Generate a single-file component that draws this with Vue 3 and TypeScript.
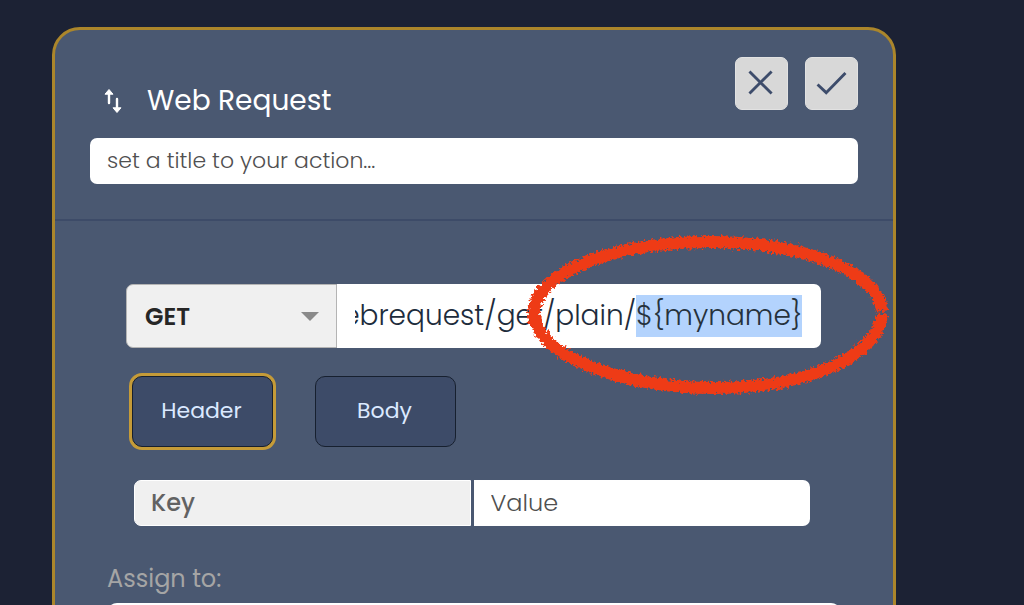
<script setup lang="ts">
import { nextTick, onMounted, ref } from 'vue'

type Tab = 'Header' | 'Body'

const tabs: Tab[] = ['Header', 'Body']
const activeTab = ref<Tab>('Header')
const title = ref('')
const method = ref('GET')
const url = ref('/webrequest/get/plain/${myname}')
const key = ref('')
const value = ref('')
const target = ref('')
const urlField = ref<HTMLInputElement | null>(null)

onMounted(async () => {
  await nextTick()
  const field = urlField.value
  if (!field) return
  field.focus({ preventScroll: true })
  field.setSelectionRange(url.value.indexOf('$'), url.value.length)
  field.scrollLeft = field.scrollWidth
})
</script>

<template>
  <main class="page">
    <form class="panel" @submit.prevent>
      <header class="head">
        <div class="head-row">
          <h1 class="heading">
            <svg class="arrows" viewBox="0 0 18 24" aria-hidden="true">
              <path d="M5 14V3M13 10v11" fill="none" stroke="#fff" stroke-width="2.4" stroke-linecap="round" />
              <path d="M5 0.5 9 5.2H1zM13 23.5 17 18.8H9z" fill="#fff" stroke="#fff" stroke-linejoin="round" />
            </svg>
            <span>Web Request</span>
          </h1>
          <div class="actions">
            <button type="button" class="square" aria-label="Cancel">
              <svg viewBox="0 0 53 53" aria-hidden="true"><path d="M14 14 37 37M37 14 14 37" /></svg>
            </button>
            <button type="submit" class="square" aria-label="Confirm">
              <svg viewBox="0 0 53 53" aria-hidden="true"><path d="M12 27.5 21 36 41 15.5" /></svg>
            </button>
          </div>
        </div>
        <input v-model="title" class="field" type="text" aria-label="Title" placeholder="set a title to your action..." />
      </header>

      <section class="body">
        <div class="request">
          <div class="method">
            <select v-model="method" aria-label="Method">
              <option>GET</option>
              <option>POST</option>
              <option>PUT</option>
              <option>DELETE</option>
            </select>
            <svg class="caret" viewBox="0 0 18 9" aria-hidden="true"><path d="M0 0h18L9 9z" fill="#8a8a8a" /></svg>
          </div>
          <input ref="urlField" v-model="url" class="url" type="text" aria-label="URL" spellcheck="false" />
          <svg class="marker" viewBox="0 0 364 164" aria-hidden="true">
            <defs>
              <filter id="chalk" x="-5%" y="-10%" width="110%" height="120%">
                <feTurbulence type="fractalNoise" baseFrequency="0.36" numOctaves="2" seed="12" result="noise" />
                <feDisplacementMap in="SourceGraphic" in2="noise" scale="8" xChannelSelector="R" yChannelSelector="G" />
              </filter>
            </defs>
            <g filter="url(#chalk)" fill="none" stroke="#ee3b18" stroke-width="12">
              <path d="M356 78C353 38 276 9 183 9S8 39 8 80s86 75 180 75 164-32 168-74" />
            </g>
          </svg>
        </div>

        <div class="tabs">
          <button
            v-for="tab in tabs"
            :key="tab"
            type="button"
            class="tab"
            :class="{ active: tab === activeTab }"
            :aria-pressed="tab === activeTab"
            @click="activeTab = tab"
          >
            {{ tab }}
          </button>
        </div>

        <div class="pair">
          <input v-model="key" class="field key" type="text" aria-label="Key" placeholder="Key" />
          <input v-model="value" class="field value" type="text" aria-label="Value" placeholder="Value" />
        </div>

        <div class="assign">
          <label for="assign-target">Assign to:</label>
          <input id="assign-target" v-model="target" class="field" type="text" />
        </div>
      </section>
    </form>
  </main>
</template>

<style>
body {
  margin: 0;
  background: #1c2234;
}
</style>

<style scoped>
* {
  box-sizing: border-box;
}

.page {
  height: 100vh;
  overflow: hidden;
  padding: 27px 128px 0 52px;
  background: #1c2234;
  font-family: Poppins, Inter, "Open Sans", sans-serif;
  font-feature-settings: "cv11";
}

.panel {
  border: 3px solid #ab862b;
  border-radius: 28px;
  background: #4a5871;
}

input,
select,
button {
  margin: 0;
  font: inherit;
  font-feature-settings: inherit;
}

.head {
  padding: 27px 35px 35px;
  border-bottom: 2px solid #3d4b68;
}

.head-row {
  display: flex;
  justify-content: space-between;
  align-items: flex-start;
  margin-bottom: 19px;
}

.heading {
  display: flex;
  align-items: center;
  gap: 25px;
  margin: 0;
  padding: 26px 0 0 14px;
  font-size: 28px;
  line-height: 36px;
  font-weight: 400;
  color: #fff;
}

.arrows {
  width: 18px;
  height: 24px;
}

.actions {
  display: flex;
  gap: 17px;
}

.square {
  width: 53px;
  height: 53px;
  padding: 0;
  border: 1px solid #e2e2e2;
  border-radius: 7px;
  background: #d8d8d8;
}

.square svg {
  display: block;
  width: 100%;
  height: 100%;
  fill: none;
  stroke: #3d4c6b;
  stroke-width: 3;
}

.field {
  display: block;
  width: 100%;
  height: 46px;
  padding: 0 17px 2px;
  border: 0;
  border-radius: 7px;
  outline: 0;
  background: #fff;
  color: #2b2b2b;
  font-size: 22px;
  font-weight: 300;
}

.field::placeholder {
  color: #505050;
  opacity: 1;
}

.field.key::placeholder {
  color: #626262;
}

.body {
  padding: 63px 72px 40px 71px;
}

.request {
  position: relative;
  display: flex;
  height: 64px;
}

.method {
  display: grid;
  flex: 0 0 211px;
  align-items: center;
}

.method select,
.caret {
  grid-area: 1 / 1;
}

.method select {
  width: 100%;
  height: 100%;
  padding: 0 18px;
  appearance: none;
  border: 1px solid #b4b4b4;
  border-radius: 7px 0 0 7px;
  background: #f0f0f0;
  color: #262626;
  font-size: 24px;
  font-weight: 600;
}

.caret {
  justify-self: end;
  width: 18px;
  height: 9px;
  margin-right: 18px;
  pointer-events: none;
}

.url {
  flex: 1;
  min-width: 0;
  padding: 0 19px 0 18px;
  border: 0;
  border-radius: 0 7px 7px 0;
  outline: 0;
  background: #fff;
  color: #1d2c3c;
  font-size: 28px;
  line-height: 42px;
  font-weight: 300;
}

.url::selection {
  background: #b3d3fd;
  color: #26323c;
}

.marker {
  position: absolute;
  top: -51px;
  right: -69px;
  width: 364px;
  height: 164px;
  pointer-events: none;
}

.tabs {
  display: flex;
  gap: 42px;
  margin: 28px 0 33px 6px;
}

.tab {
  width: 141px;
  height: 71px;
  padding: 0 2px 2px 0;
  border: 1px solid #17202f;
  border-radius: 10px;
  background: #3d4b68;
  color: #dbe9ff;
  font-size: 22px;
}

.tab.active {
  box-shadow: 0 0 0 3px #c59b38;
}

.pair {
  display: grid;
  grid-template-columns: 1fr 1fr;
  gap: 3px;
  margin: 0 11px 35px 8px;
}

.pair .field {
  font-size: 24px;
}

.field.key {
  padding-left: 16px;
  border: 1px solid #fff;
  border-radius: 7px 0 0 7px;
  background: #f0f0f0;
  font-weight: 500;
}

.field.value {
  border-radius: 0 7px 7px 0;
}

.assign {
  margin: 0 -20px 0 -19px;
}

.assign label {
  display: block;
  margin-bottom: 6px;
  color: #a5a5a5;
  font-size: 24px;
  line-height: 36px;
}

.assign .field {
  border-radius: 10px;
}
</style>
